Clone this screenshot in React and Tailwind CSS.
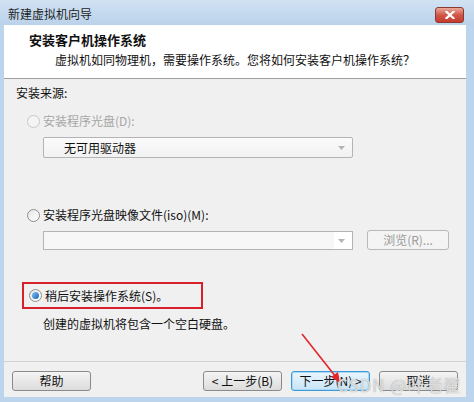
import React from "react";

const font = { fontFamily: '"Microsoft YaHei", "Noto Sans CJK SC", "Noto Sans", sans-serif' };

function Radio({ checked, disabled }) {
  return (
    <span
      className={`relative inline-flex h-[13px] w-[13px] shrink-0 items-center justify-center rounded-full border ${
        disabled ? "border-[#c8c8c8] bg-[#f4f4f4]" : "border-[#8f8f8f] bg-gradient-to-br from-[#e6e6e6] to-white"
      }`}
    >
      {checked && <span className="h-[7px] w-[7px] rounded-full bg-gradient-to-br from-[#7fc3f5] to-[#1463b4]" />}
    </span>
  );
}

function Arrow({ light }) {
  return (
    <svg width="7" height="4" viewBox="0 0 7 4" className="shrink-0">
      <path d="M0 0h7L3.5 4z" fill={light ? "#b4b4b4" : "#9a9a9a"} />
    </svg>
  );
}

function Button({ children, focused, disabled, className = "" }) {
  return (
    <div
      className={`flex h-[20px] w-[79px] items-center justify-center rounded-[3px] border text-[12px] ${
        focused
          ? "border-[#3c9ad7] bg-gradient-to-b from-[#eaf6fd] to-[#c8e4f6] shadow-[inset_0_0_0_1px_#a8d8f4]"
          : "border-[#8a8a8a] bg-gradient-to-b from-[#f4f4f4] to-[#dcdcdc]"
      } ${disabled ? "border-[#b8b8b8] from-[#f4f4f4] to-[#f4f4f4] text-[#9a9a9a]" : "text-[#111]"} ${className}`}
    >
      {children}
    </div>
  );
}

export default function App() {
  return (
    <div className="relative h-[402px] w-[474px] overflow-hidden bg-[#bcd4ec]" style={font}>
      {/* title bar */}
      <div className="flex h-[25px] items-center justify-between bg-gradient-to-b from-[#d1e2f3] to-[#bad2ea] pl-[8px] pr-[10px]">
        <span className="mt-[3px] text-[12px] text-[#1e1e1e]">新建虚拟机向导</span>
        <div className="mt-[5px] flex h-[16px] w-[29px] items-center justify-center rounded-[3px] border border-[#8b3a32] bg-gradient-to-b from-[#e9a89a] via-[#d0574a] to-[#c23c2c]">
          <svg width="10" height="8" viewBox="0 0 10 8">
            <path d="M1.5 0.8 8.5 7.2M8.5 0.8 1.5 7.2" stroke="#fff" strokeWidth="2.2" strokeLinecap="square" />
          </svg>
        </div>
      </div>

      <div className="ml-[4px] mr-[8px] flex h-[372px] flex-col">
        {/* header */}
        <div className="flex h-[54px] flex-col border-b border-[#a0a0a0] bg-white pl-[25px] pt-[5px]">
          <span className="text-[13px] font-bold leading-[20px] text-[#111]">安装客户机操作系统</span>
          <span className="pl-[26px] text-[12px] leading-[20px] text-[#111]">
            虚拟机如同物理机，需要操作系统。您将如何安装客户机操作系统？
          </span>
        </div>

        {/* body */}
        <div className="flex flex-1 flex-col bg-[#f0f0f0] pl-[12px] pt-[5px] text-[12px]">
          <span className="leading-[18px] text-[#111]">安装来源:</span>

          <div className="mt-[10px] flex items-center gap-[3px] pl-[11px] leading-[18px]">
            <Radio disabled />
            <span className="text-[#a6a6a6]">安装程序光盘(D):</span>
          </div>
          <div className="ml-[27px] mt-[7px] flex h-[21px] w-[310px] items-center justify-between rounded-[2px] border border-[#b4b4b4] bg-gradient-to-b from-[#fbfbfb] to-[#f1f1f1] pl-[20px] pr-[7px]">
            <span className="text-[#111]">无可用驱动器</span>
            <Arrow light />
          </div>

          <div className="mt-[48px] flex items-center gap-[3px] pl-[11px] leading-[18px]">
            <Radio />
            <span className="text-[#111]">安装程序光盘映像文件(iso)(M):</span>
          </div>
          <div className="mt-[7px] flex items-center">
            <div className="ml-[27px] flex h-[19px] w-[310px] items-center justify-between border border-[#b4b4b4] bg-white pr-[7px]">
              <span className="h-full w-[290px] bg-[#f7f7f7]" />
              <Arrow light />
            </div>
            <Button disabled className="ml-[14px] mt-[-2px] w-[82px] rounded-[2px]">
              浏览(R)...
            </Button>
          </div>

          <div className="ml-[6px] mt-[32px] flex h-[27px] w-[181px] items-center gap-[3px] border-2 border-[#d8202a] pl-[5px]">
            <Radio checked />
            <span className="text-[#111]">稍后安装操作系统(S)。</span>
          </div>
          <span className="ml-[27px] mt-[6px] leading-[18px] text-[#111]">创建的虚拟机将包含一个空白硬盘。</span>
        </div>

        {/* footer */}
        <div className="flex h-[36px] items-start border-t border-[#d2d2d2] bg-[#f0f0f0] px-[8px] pt-[9px]">
          <Button>帮助</Button>
          <div className="flex-1" />
          <Button>&lt; 上一步(B)</Button>
          <Button focused className="ml-[9px]">下一步(N) &gt;</Button>
          <Button className="ml-[9px]">取消</Button>
        </div>
      </div>

      {/* pointer arrow */}
      <svg className="pointer-events-none absolute left-0 top-0" width="474" height="402">
        <line x1="302" y1="334" x2="336" y2="377" stroke="#e5252a" strokeWidth="1.6" />
        <path d="M340 383 L331 377 L338 372 Z" fill="#e5252a" />
      </svg>

      {/* watermark */}
      <span className="pointer-events-none absolute left-[337px] top-[372px] text-[17px] tracking-[1px] text-white/70 [text-shadow:0_0_1px_#888]">
        CSDN @叶老翟
      </span>
    </div>
  );
}
